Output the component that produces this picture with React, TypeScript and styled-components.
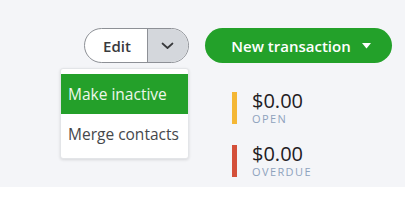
import React from "react";
import styled, { createGlobalStyle } from "styled-components";

const Global = createGlobalStyle`
  html, body { margin: 0; padding: 0; background: #ffffff; }
  body { font-family: "Open Sans", "Lato", "Liberation Sans", sans-serif; }
  * { box-sizing: border-box; }
`;

const Page = styled.div`
  width: 405px;
  height: 187px;
  background: #f4f5f8;
  display: flex;
  flex-direction: column;
`;

const Toolbar = styled.div`
  display: flex;
  justify-content: flex-end;
  align-items: center;
  gap: 16px;
  padding: 28px 13px 0 0;
`;

const EditWrap = styled.div`
  position: relative;
`;

const SplitButton = styled.div`
  display: flex;
  width: 105px;
  height: 35px;
  border: 1px solid #8d9096;
  border-radius: 18px;
  overflow: hidden;
  background: #ffffff;
`;

const EditLabel = styled.span`
  flex: 0 0 63px;
  display: flex;
  align-items: center;
  justify-content: center;
  padding-left: 2px;
  font-size: 15px;
  font-weight: 600;
  color: #393a3d;
  border-right: 1px solid #8d9096;
`;

const Caret = styled.span`
  flex: 1;
  display: flex;
  align-items: center;
  justify-content: center;
  background: #d4d7dc;
  padding-right: 2px;
`;

const Menu = styled.div`
  position: absolute;
  top: 40px;
  right: 0;
  width: 129px;
  padding: 5px 0;
  background: #ffffff;
  border: 1px solid #e3e5e8;
  border-radius: 3px;
  box-shadow: 0 1px 3px rgba(0, 0, 0, 0.12);
  display: flex;
  flex-direction: column;
`;

const MenuItem = styled.div<{ $active?: boolean }>`
  height: ${(p) => (p.$active ? 40 : 39)}px;
  display: flex;
  align-items: center;
  padding-left: 7px;
  font-size: 15.5px;
  white-space: nowrap;
  background: ${(p) => (p.$active ? "#24a02a" : "#ffffff")};
  color: ${(p) => (p.$active ? "#eef7ec" : "#45474b")};
`;

const PrimaryButton = styled.button`
  width: 187px;
  height: 35px;
  border: none;
  border-radius: 18px;
  background: #23a12a;
  color: #ffffff;
  font-family: inherit;
  font-size: 15px;
  font-weight: 600;
  display: flex;
  align-items: center;
  justify-content: center;
  gap: 11px;
  padding: 0 0 0 5px;
`;

const Balances = styled.div`
  display: flex;
  flex-direction: column;
  gap: 20px;
  padding: 29px 0 0 232px;
`;

const Balance = styled.div`
  display: flex;
  gap: 15px;
`;

const Bar = styled.span<{ $color: string }>`
  width: 5px;
  height: 32px;
  background: ${(p) => p.$color};
`;

const Figures = styled.div`
  display: flex;
  flex-direction: column;
  margin-top: -1px;
`;

const Amount = styled.span`
  font-size: 20px;
  font-weight: 400;
  line-height: 20px;
  color: #1f2023;
`;

const Label = styled.span`
  margin-top: 2px;
  font-size: 11px;
  line-height: 12px;
  letter-spacing: 1.4px;
  color: #8ea2bd;
`;

export default function App() {
  return (
    <>
      <Global />
      <Page>
        <Toolbar>
          <EditWrap>
            <SplitButton>
              <EditLabel>Edit</EditLabel>
              <Caret>
                <svg width="13" height="8" viewBox="0 0 13 8">
                  <path d="M1.5 1.5 L6.5 6 L11.5 1.5" fill="none" stroke="#393a3d" strokeWidth="1.7" strokeLinecap="round" strokeLinejoin="round" />
                </svg>
              </Caret>
            </SplitButton>
            <Menu>
              <MenuItem $active>Make inactive</MenuItem>
              <MenuItem>Merge contacts</MenuItem>
            </Menu>
          </EditWrap>
          <PrimaryButton>
            <span>New transaction</span>
            <svg width="9" height="6" viewBox="0 0 9 6">
              <path d="M0 0 H9 L4.5 5.5 Z" fill="#ffffff" />
            </svg>
          </PrimaryButton>
        </Toolbar>
        <Balances>
          <Balance>
            <Bar $color="#f4b735" />
            <Figures>
              <Amount>$0.00</Amount>
              <Label>OPEN</Label>
            </Figures>
          </Balance>
          <Balance>
            <Bar $color="#d4503a" />
            <Figures>
              <Amount>$0.00</Amount>
              <Label>OVERDUE</Label>
            </Figures>
          </Balance>
        </Balances>
      </Page>
    </>
  );
}
